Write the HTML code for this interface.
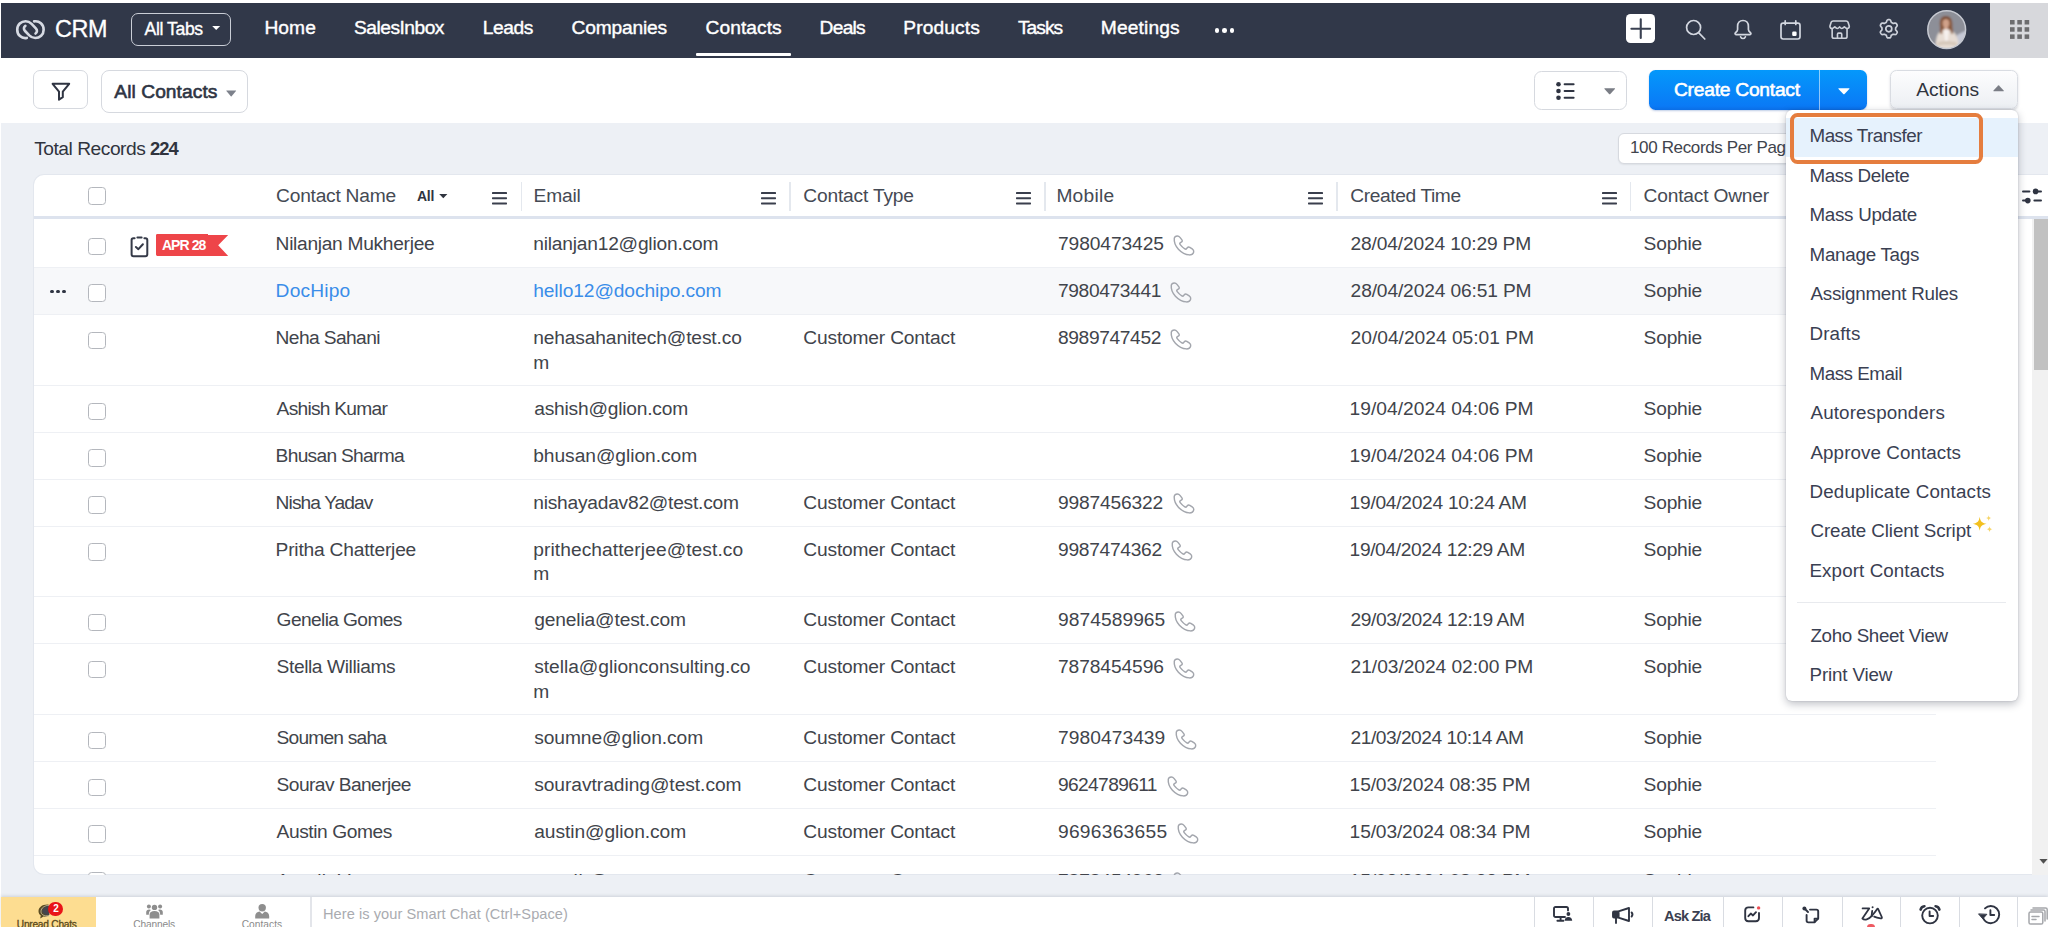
<!DOCTYPE html>
<html><head><meta charset="utf-8"><title>Contacts - Zoho CRM</title>
<style>
*{box-sizing:border-box;margin:0;padding:0}
html,body{width:2048px;height:927px;overflow:hidden;background:#fff}
body{font-family:"Liberation Sans",sans-serif;color:#333;position:relative}
.a{position:absolute}
.t{position:absolute;white-space:nowrap;line-height:1}
svg{position:absolute;overflow:visible}
#nav{left:1px;top:3px;width:1988.5px;height:55px;background:#313849}
#gridbox{left:1989.5px;top:3px;width:58.5px;height:55px;background:#d7d8dc}
#graybg{left:1px;top:123px;width:2047px;height:774.5px;background:#edf0f5}
.btn{position:absolute;border:1.3px solid #d6d9df;border-radius:7px;background:#fff}
#card{left:33px;top:173.7px;width:2015px;height:701.4px;background:#fff;border-radius:11px 0 0 11px;border:1px solid #e3e7ee;border-right:none;overflow:hidden}
  .hl{position:absolute;left:34px;height:1.2px;background:#eef0f4;width:1902px}
.cb{position:absolute;left:88.2px;width:17.6px;height:17.6px;border:1.8px solid #b4b7bd;border-radius:3.6px;background:#fff}
.vs{position:absolute;top:182px;width:1.3px;height:29px;background:#e4e8ee}

</style></head><body>
<div id="nav" class="a"></div><div id="gridbox" class="a"></div><svg style="left:16px;top:19.6px" width="28.9" height="19.3" viewBox="0 0 30 20" fill="none" stroke="#d6dae3" stroke-width="2.75" stroke-linecap="round" stroke-linejoin="round">
<path d="M11.2 18.6 C5.6 19.6 1.3 15.4 1.3 10 C1.3 4.6 5.4 1.3 10 1.3 C12.6 1.3 14.5 2.3 16.2 4 L20.6 8.6 C22.4 10.5 22 12.8 20.3 14"/>
<path d="M18.8 1.4 C24.4 0.4 28.7 4.6 28.7 10 C28.7 15.4 24.6 18.7 20 18.7 C17.4 18.7 15.5 17.7 13.8 16 L9.4 11.4 C7.6 9.5 8 7.2 9.7 6"/>
</svg><div class="t" style="left:54.90px;top:17.89px;font-size:23.4px;color:#fff;letter-spacing:-0.342px;-webkit-text-stroke:0.3px #fff;">CRM</div><div class="a" style="left:131px;top:13.2px;width:99.6px;height:32.6px;border:1.6px solid #c9cdd6;border-radius:7px"></div><div class="t" style="left:144.60px;top:20.80px;font-size:17.6px;color:#fff;letter-spacing:-0.401px;-webkit-text-stroke:0.35px #fff;">All Tabs</div><svg style="left:211.6px;top:26.3px" width="8.4" height="4.2" viewBox="0 0 8.4 4.2"><path d="M0.2 0H8.2L4.2 4.1Z" fill="#fff"/></svg><div class="t" style="left:264.40px;top:17.95px;font-size:19.2px;color:#fff;letter-spacing:0.096px;-webkit-text-stroke:0.4px #fff;">Home</div><div class="t" style="left:354.00px;top:17.95px;font-size:19.2px;color:#fff;letter-spacing:-0.505px;-webkit-text-stroke:0.4px #fff;">SalesInbox</div><div class="t" style="left:482.70px;top:17.95px;font-size:19.2px;color:#fff;letter-spacing:-0.421px;-webkit-text-stroke:0.4px #fff;">Leads</div><div class="t" style="left:571.50px;top:17.95px;font-size:19.2px;color:#fff;letter-spacing:-0.182px;-webkit-text-stroke:0.4px #fff;">Companies</div><div class="t" style="left:705.60px;top:17.95px;font-size:19.2px;color:#fff;letter-spacing:0.053px;-webkit-text-stroke:0.4px #fff;">Contacts</div><div class="t" style="left:819.60px;top:17.95px;font-size:19.2px;color:#fff;letter-spacing:-0.740px;-webkit-text-stroke:0.4px #fff;">Deals</div><div class="t" style="left:903.30px;top:17.95px;font-size:19.2px;color:#fff;letter-spacing:0.125px;-webkit-text-stroke:0.4px #fff;">Products</div><div class="t" style="left:1018.00px;top:17.95px;font-size:19.2px;color:#fff;letter-spacing:-0.988px;-webkit-text-stroke:0.4px #fff;">Tasks</div><div class="t" style="left:1100.80px;top:17.95px;font-size:19.2px;color:#fff;letter-spacing:0.134px;-webkit-text-stroke:0.4px #fff;">Meetings</div><div class="a" style="left:695.5px;top:53.3px;width:95.2px;height:3px;background:#fff;border-radius:1px"></div><div class="a" style="left:1214.6px;top:28.3px;width:4.6px;height:4.6px;border-radius:50%;background:#fff"></div><div class="a" style="left:1222.2px;top:28.3px;width:4.6px;height:4.6px;border-radius:50%;background:#fff"></div><div class="a" style="left:1229.8px;top:28.3px;width:4.6px;height:4.6px;border-radius:50%;background:#fff"></div><div class="a" style="left:1626.2px;top:14.3px;width:29.3px;height:29.2px;background:#fff;border-radius:4.5px"></div><svg style="left:1626.2px;top:14.3px" width="29.3" height="29.2" viewBox="0 0 29.3 29.2" stroke="#3a4152" stroke-width="2.1" stroke-linecap="round"><path d="M5.4 14.7H24.1M14.75 5.4V24"/></svg><svg style="left:1683px;top:17px" width="24" height="24" viewBox="0 0 24 24" fill="none" stroke="#d3d7e0" stroke-width="1.7" stroke-linecap="round"><circle cx="10.6" cy="10.5" r="7"/><path d="M15.8 15.9L21.8 22"/></svg><svg style="left:1733px;top:19px" width="20" height="21" viewBox="0 0 20 21" fill="none" stroke="#d3d7e0" stroke-width="1.7" stroke-linecap="round" stroke-linejoin="round">
<path d="M10 1.5C6.6 1.5 4.6 4 4.6 7.2V10.4C4.6 12 3.6 12.8 2.4 13.8C1.8 14.3 2 15.6 3 15.6H17C18 15.6 18.2 14.3 17.6 13.8C16.4 12.8 15.4 12 15.4 10.4V7.2C15.4 4 13.4 1.5 10 1.5Z"/>
<path d="M7.6 17.8C8.2 19 9 19.5 10 19.5C11 19.5 11.8 19 12.4 17.8"/></svg><svg style="left:1779.6px;top:19.5px" width="21" height="20" viewBox="0 0 21 20" fill="none" stroke="#d3d7e0" stroke-width="1.7" stroke-linecap="round" stroke-linejoin="round">
<rect x="1" y="3.2" width="19" height="15.8" rx="2.2"/><path d="M5.2 0.9V4.4M15.8 0.9V4.4"/><rect x="12.2" y="11.6" width="4.4" height="4.4" rx="1.2" fill="#fff" stroke="none"/></svg><svg style="left:1829.2px;top:20px" width="21.2" height="19.3" viewBox="0 0 21.5 19.5" fill="none" stroke="#cdd1da" stroke-width="1.65" stroke-linecap="round" stroke-linejoin="round">
<path d="M4.2 1H17.3C18.4 1 19 1.5 19.4 2.4L20.6 6.4C20.6 8 19.4 8.6 18.4 8.6C17.2 8.6 16.2 7.6 15.6 7C14.8 7.8 14 8.6 13 8.6C12 8.6 11.4 7.8 10.75 7C10.1 7.8 9.5 8.6 8.5 8.6C7.5 8.6 6.7 7.8 5.9 7C5.3 7.6 4.3 8.6 3.1 8.6C2.1 8.6 0.9 8 0.9 6.4L2.1 2.4C2.5 1.5 3.1 1 4.2 1Z"/>
<path d="M3.2 8.8V16.6C3.2 17.8 3.9 18.5 5.1 18.5H16.4C17.6 18.5 18.3 17.8 18.3 16.6V8.8"/><path d="M8.6 18.3V14.3C8.6 13.7 9 13.3 9.6 13.3H11.9C12.5 13.3 12.9 13.7 12.9 14.3V18.3"/></svg><svg style="left:1877.6px;top:17.6px" width="22" height="22" viewBox="0 0 22 22" fill="none" stroke="#cdd1da" stroke-width="1.7" stroke-linejoin="round">
<path d="M10.80 1.65 L11.40 1.67 L11.99 1.73 L12.50 2.26 L12.87 3.07 L13.15 3.89 L13.42 4.47 L13.83 4.66 L14.22 4.87 L14.61 5.10 L14.97 5.37 L15.61 5.31 L16.46 5.14 L17.34 5.06 L18.06 5.23 L18.41 5.72 L18.72 6.22 L19.01 6.75 L19.25 7.30 L19.04 8.00 L18.53 8.73 L17.96 9.38 L17.59 9.91 L17.64 10.35 L17.65 10.80 L17.64 11.25 L17.59 11.69 L17.96 12.22 L18.53 12.87 L19.04 13.60 L19.25 14.30 L19.01 14.85 L18.72 15.38 L18.41 15.88 L18.06 16.37 L17.34 16.54 L16.46 16.46 L15.61 16.29 L14.97 16.23 L14.61 16.50 L14.22 16.73 L13.83 16.94 L13.42 17.13 L13.15 17.71 L12.87 18.53 L12.50 19.34 L11.99 19.87 L11.40 19.93 L10.80 19.95 L10.20 19.93 L9.61 19.87 L9.10 19.34 L8.73 18.53 L8.45 17.71 L8.18 17.13 L7.77 16.94 L7.38 16.73 L6.99 16.50 L6.63 16.23 L5.99 16.29 L5.14 16.46 L4.26 16.54 L3.54 16.37 L3.19 15.88 L2.88 15.38 L2.59 14.85 L2.35 14.30 L2.56 13.60 L3.07 12.87 L3.64 12.22 L4.01 11.69 L3.96 11.25 L3.95 10.80 L3.96 10.35 L4.01 9.91 L3.64 9.38 L3.07 8.73 L2.56 8.00 L2.35 7.30 L2.59 6.75 L2.88 6.22 L3.19 5.72 L3.54 5.23 L4.26 5.06 L5.14 5.14 L5.99 5.31 L6.63 5.37 L6.99 5.10 L7.37 4.87 L7.77 4.66 L8.18 4.47 L8.45 3.89 L8.73 3.07 L9.10 2.26 L9.61 1.73 L10.20 1.67Z"/><circle cx="10.8" cy="10.8" r="3"/></svg><svg style="left:1926.8px;top:9.8px" width="39.4" height="39.4" viewBox="0 0 39.4 39.4">
<defs><clipPath id="avc"><circle cx="19.7" cy="19.7" r="18.7"/></clipPath><filter id="avb" x="-10%" y="-10%" width="120%" height="120%"><feGaussianBlur stdDeviation="0.8"/></filter></defs>
<circle cx="19.7" cy="19.7" r="19" fill="#8d8f98"/>
<g clip-path="url(#avc)"><g filter="url(#avb)">
<rect x="-2" y="-2" width="44" height="44" fill="#8d8f98"/>
<path d="M30 25L42 19V42H27Z" fill="#c6c9d6"/>
<path d="M12.9 15.5C12.2 9.4 14.6 6.1 18.8 6.1C23.2 6.1 25.6 9.4 25.4 15.5C25.3 18.6 26 21.4 26.6 23.8L12.6 23.8C13.2 21 13.2 18.4 12.9 15.5Z" fill="#87583c"/>
<path d="M14.8 11C15.4 8 17 7 18.9 7C21.2 7 22.8 8.2 23.2 11.2C22 10 20.6 9.2 18.6 9.2C16.8 9.2 15.6 9.9 14.8 11Z" fill="#6f432d"/>
<ellipse cx="19" cy="13.2" rx="3.3" ry="4.2" fill="#d0a189"/>
<rect x="17.4" y="16.4" width="3.2" height="4" fill="#d5ab95"/>
<path d="M8.4 42C8.4 31 9.4 23.4 14 21L17.2 19.6H21L24.8 20.9C30.2 23.2 31.8 31 32.2 42Z" fill="#e7ddd4"/>
<path d="M16.6 19.6L18.2 31H20.6L22 19.6Z" fill="#f6f1ef"/>
<path d="M13.4 17C13 19.6 13 22 13.4 24L15.4 23.6C15.2 21 15.2 19 15.6 17Z" fill="#8a5b3f"/>
<path d="M24.8 17C25.4 19.6 25.8 22 26.2 24L24 23.6C23.8 21 23.4 19 22.8 17Z" fill="#8a5b3f"/>
<path d="M10.6 32.6C15 30.6 24 30.6 29.6 32.6L30 36C24 34.2 15 34.2 10.2 36Z" fill="#d6c8ba"/>
</g></g>
<circle cx="19.7" cy="19.7" r="18.9" fill="none" stroke="#c6c9d1" stroke-width="1.5"/></svg><svg style="left:2009.8px;top:20px" width="20" height="20" viewBox="0 0 20 20"><rect x="0.0" y="0.0" width="4.6" height="4.5" fill="#6c6c6e"/><rect x="7.3" y="0.0" width="4.6" height="4.5" fill="#6c6c6e"/><rect x="14.6" y="0.0" width="4.6" height="4.5" fill="#6c6c6e"/><rect x="0.0" y="7.2" width="4.6" height="4.5" fill="#6c6c6e"/><rect x="7.3" y="7.2" width="4.6" height="4.5" fill="#6c6c6e"/><rect x="14.6" y="7.2" width="4.6" height="4.5" fill="#6c6c6e"/><rect x="0.0" y="14.4" width="4.6" height="4.5" fill="#6c6c6e"/><rect x="7.3" y="14.4" width="4.6" height="4.5" fill="#6c6c6e"/><rect x="14.6" y="14.4" width="4.6" height="4.5" fill="#6c6c6e"/></svg><div id="graybg" class="a"></div><div class="btn" style="left:33.3px;top:70.3px;width:54.3px;height:39.2px"></div><svg style="left:51px;top:82px" width="20" height="20" viewBox="0 0 20 20" fill="none" stroke="#2f3442" stroke-width="2" stroke-linejoin="round" stroke-linecap="round"><path d="M1.6 1.8H18.2L11.8 9.6V15.2L8 17.6V9.6Z"/></svg><div class="btn" style="left:101.3px;top:70.3px;width:146.4px;height:42.4px;border-radius:8px"></div><div class="t" style="left:114.30px;top:81.95px;font-size:19.2px;color:#2e3443;letter-spacing:0.065px;-webkit-text-stroke:0.6px #2e3443;">All Contacts</div><svg style="left:225.8px;top:89.6px" width="10.4" height="6.8" viewBox="0 0 10.4 6.8"><path d="M0.6 0.4H9.8Q10.4 0.5 10 1.1L5.6 6.3Q5.2 6.7 4.8 6.3L0.4 1.1Q0 .5 .6 .4Z" fill="#7d818b"/></svg><div class="btn" style="left:1534px;top:71.2px;width:92.8px;height:38.4px;border-radius:7.5px"></div><svg style="left:1556.4px;top:80.8px" width="19" height="20" viewBox="0 0 19 20"><circle cx="2.5" cy="3.2" r="2.3" fill="#2f3442"/><rect x="7.6" y="2.2" width="11" height="2" rx="1" fill="#2f3442"/><circle cx="2.5" cy="10" r="2.3" fill="#2f3442"/><rect x="7.6" y="9" width="11" height="2" rx="1" fill="#2f3442"/><circle cx="2.5" cy="16.7" r="2.3" fill="#2f3442"/><rect x="7.6" y="15.7" width="11" height="2" rx="1" fill="#2f3442"/></svg><svg style="left:1604.2px;top:88.4px" width="11.4" height="6.6" viewBox="0 0 11.4 6.6"><path d="M0.7 0.3H10.7Q11.4 .4 10.9 1L6.1 6.2Q5.7 6.5 5.3 6.2L.5 1Q0 .4 .7 .3Z" fill="#7a7d85"/></svg><div class="a" style="left:1649.4px;top:70px;width:217.8px;height:40.2px;border-radius:6.5px;background:linear-gradient(#0498fb,#0a7af6 90%,#0b6ee6);box-shadow:0 1px 2px rgba(0,60,160,.25)"></div><div class="a" style="left:1819px;top:70px;width:1.2px;height:40.2px;background:rgba(255,255,255,.55)"></div><div class="t" style="left:1674.00px;top:79.95px;font-size:19.2px;color:#fff;letter-spacing:-0.232px;-webkit-text-stroke:0.6px #fff;">Create Contact</div><svg style="left:1838px;top:88.2px" width="11.8" height="6.6" viewBox="0 0 11.8 6.6"><path d="M0.7 0.2H11.1Q11.8 .3 11.3 .9L6.3 6.2Q5.9 6.5 5.5 6.2L.5 .9Q0 .3 .7 .2Z" fill="#fff"/></svg><div class="a" style="left:1890px;top:70.4px;width:127.8px;height:38.4px;border-radius:6.5px;border:1.2px solid #d9dce2;background:linear-gradient(#fdfdfe,#eceff3);box-shadow:0 1.5px 2.5px rgba(40,50,70,.18)"></div><div class="t" style="left:1916.20px;top:79.75px;font-size:19.2px;color:#30343e;letter-spacing:0.012px;">Actions</div><svg style="left:1993px;top:84.8px" width="11.2" height="6.4" viewBox="0 0 11.2 6.4"><path d="M0.7 6.2H10.5Q11.2 6.1 10.7 5.5L6 .4Q5.6 0 5.2 .4L.5 5.5Q0 6.1 .7 6.2Z" fill="#7a7d85"/></svg><div class="t" style="left:34.20px;top:139.05px;font-size:19.2px;color:#30343e;letter-spacing:-0.476px;">Total Records</div><div class="t" style="left:150.10px;top:139.72px;font-size:18.4px;color:#30343e;font-weight:700;letter-spacing:-1.028px;">224</div><div class="a" style="left:1617.8px;top:132.8px;width:200px;height:31px;border:1.4px solid #d6d9df;border-radius:6px;background:#fff;box-shadow:0 1px 1.5px rgba(40,50,70,.08)"></div><div class="t" style="left:1630.00px;top:139.41px;font-size:17px;color:#40444d;letter-spacing:-0.360px;">100 Records Per Page</div><div id="card" class="a"></div><div class="t" style="left:276.10px;top:185.65px;font-size:19.2px;color:#454a54;letter-spacing:-0.243px;">Contact Name</div><div class="t" style="left:533.60px;top:185.65px;font-size:19.2px;color:#454a54;letter-spacing:-0.179px;">Email</div><div class="t" style="left:803.30px;top:185.65px;font-size:19.2px;color:#454a54;letter-spacing:-0.180px;">Contact Type</div><div class="t" style="left:1056.40px;top:185.65px;font-size:19.2px;color:#454a54;letter-spacing:0.230px;">Mobile</div><div class="t" style="left:1350.30px;top:185.65px;font-size:19.2px;color:#454a54;letter-spacing:-0.395px;">Created Time</div><div class="t" style="left:1643.50px;top:185.65px;font-size:19.2px;color:#454a54;letter-spacing:-0.190px;">Contact Owner</div><div class="t" style="left:416.90px;top:188.65px;font-size:14px;color:#30343f;font-weight:700;letter-spacing:-0.200px;">All</div><svg style="left:439.4px;top:194.4px" width="8.6" height="4.4" viewBox="0 0 8.6 4.4"><path d="M0.2 0H8.4L4.3 4.3Z" fill="#30343f"/></svg><div class="cb" style="top:187px"></div><div class="vs" style="left:520.8px"></div><svg style="left:492.1px;top:192px" width="15" height="13" viewBox="0 0 15 13" fill="#3a3f4d"><rect x="0" y="0" width="15" height="2" rx=".6"/><rect x="0" y="5.2" width="15" height="2" rx=".6"/><rect x="0" y="10.4" width="15" height="2" rx=".6"/></svg><div class="vs" style="left:789.4px"></div><svg style="left:760.7px;top:192px" width="15" height="13" viewBox="0 0 15 13" fill="#3a3f4d"><rect x="0" y="0" width="15" height="2" rx=".6"/><rect x="0" y="5.2" width="15" height="2" rx=".6"/><rect x="0" y="10.4" width="15" height="2" rx=".6"/></svg><div class="vs" style="left:1044.4px"></div><svg style="left:1015.7px;top:192px" width="15" height="13" viewBox="0 0 15 13" fill="#3a3f4d"><rect x="0" y="0" width="15" height="2" rx=".6"/><rect x="0" y="5.2" width="15" height="2" rx=".6"/><rect x="0" y="10.4" width="15" height="2" rx=".6"/></svg><div class="vs" style="left:1336.4px"></div><svg style="left:1307.7px;top:192px" width="15" height="13" viewBox="0 0 15 13" fill="#3a3f4d"><rect x="0" y="0" width="15" height="2" rx=".6"/><rect x="0" y="5.2" width="15" height="2" rx=".6"/><rect x="0" y="10.4" width="15" height="2" rx=".6"/></svg><div class="vs" style="left:1630.2px"></div><svg style="left:1601.5px;top:192px" width="15" height="13" viewBox="0 0 15 13" fill="#3a3f4d"><rect x="0" y="0" width="15" height="2" rx=".6"/><rect x="0" y="5.2" width="15" height="2" rx=".6"/><rect x="0" y="10.4" width="15" height="2" rx=".6"/></svg><div class="a" style="left:34px;top:216.3px;width:2014px;height:2.4px;background:#dde3ee"></div><svg style="left:2021.6px;top:187px" width="20" height="18" viewBox="0 0 20 18" fill="#2f3442"><rect x="0" y="3.4" width="8.4" height="2" rx="1"/><circle cx="13.6" cy="4.4" r="2.8"/><rect x="13.6" y="3.4" width="6.4" height="2" rx="1"/>
<rect x="0" y="12.6" width="6" height="2" rx="1"/><circle cx="5.8" cy="13.6" r="2.8"/><rect x="11.4" y="12.6" width="8.6" height="2" rx="1"/></svg><div class="a" style="left:34px;top:267.7px;width:1902px;height:47.7px;background:#f7f8fa"></div><div class="hl" style="top:266.5px"></div><div class="hl" style="top:314.2px"></div><div class="hl" style="top:385.1px"></div><div class="hl" style="top:431.8px"></div><div class="hl" style="top:478.6px"></div><div class="hl" style="top:525.5px"></div><div class="hl" style="top:596.2px"></div><div class="hl" style="top:643.1px"></div><div class="hl" style="top:714.2px"></div><div class="hl" style="top:761.0px"></div><div class="hl" style="top:807.7px"></div><div class="hl" style="top:854.7px"></div><div class="cb" style="top:237.8px"></div><div class="t" style="left:275.60px;top:234.15px;font-size:19.2px;color:#41444b;letter-spacing:-0.304px;">Nilanjan Mukherjee</div><div class="t" style="left:533.20px;top:234.15px;font-size:19.2px;color:#41444b;letter-spacing:-0.205px;">nilanjan12@glion.com</div><div class="t" style="left:1058.00px;top:234.15px;font-size:19.2px;color:#41444b;letter-spacing:-0.082px;">7980473425</div><svg style="left:1173.2px;top:235.0px" width="22" height="21" viewBox="0 0 22 21" fill="none" stroke="#a3a6ad" stroke-width="1.45" stroke-linejoin="round" stroke-linecap="round"><path d="M1.3 3.2C1.6 1.6 3 .9 4.3 .9C5.5 .9 6.4 1.6 7.2 2.6L8.9 4.9C9.6 5.9 9.2 6.6 8.2 7.2L7.2 7.8C6.6 8.2 6.6 8.8 7.2 9.6C8.6 11.4 10 12.7 11.8 13.8C12.6 14.3 13.2 14.2 13.6 13.6L14.3 12.7C15 11.8 15.8 11.7 16.8 12.3L19.2 13.9C20.4 14.7 20.9 15.6 20.7 16.8C20.4 18.6 18.6 19.9 16.4 19.9C12.4 19.7 8.4 17.4 5.4 14.2C2.6 11.2 .9 7 1.3 3.2Z"/></svg><div class="t" style="left:1350.60px;top:234.15px;font-size:19.2px;color:#41444b;letter-spacing:-0.161px;">28/04/2024 10:29 PM</div><div class="t" style="left:1643.60px;top:234.15px;font-size:19.2px;color:#41444b;letter-spacing:-0.215px;">Sophie</div><div class="cb" style="top:284.1px"></div><div class="t" style="left:275.60px;top:281.05px;font-size:19.2px;color:#3a8de9;letter-spacing:0.181px;">DocHipo</div><div class="t" style="left:533.20px;top:281.05px;font-size:19.2px;color:#3a8de9;letter-spacing:-0.098px;">hello12@dochipo.com</div><div class="t" style="left:1058.00px;top:281.05px;font-size:19.2px;color:#41444b;letter-spacing:-0.371px;">7980473441</div><svg style="left:1170.1px;top:281.9px" width="22" height="21" viewBox="0 0 22 21" fill="none" stroke="#a3a6ad" stroke-width="1.45" stroke-linejoin="round" stroke-linecap="round"><path d="M1.3 3.2C1.6 1.6 3 .9 4.3 .9C5.5 .9 6.4 1.6 7.2 2.6L8.9 4.9C9.6 5.9 9.2 6.6 8.2 7.2L7.2 7.8C6.6 8.2 6.6 8.8 7.2 9.6C8.6 11.4 10 12.7 11.8 13.8C12.6 14.3 13.2 14.2 13.6 13.6L14.3 12.7C15 11.8 15.8 11.7 16.8 12.3L19.2 13.9C20.4 14.7 20.9 15.6 20.7 16.8C20.4 18.6 18.6 19.9 16.4 19.9C12.4 19.7 8.4 17.4 5.4 14.2C2.6 11.2 .9 7 1.3 3.2Z"/></svg><div class="t" style="left:1350.60px;top:281.05px;font-size:19.2px;color:#41444b;letter-spacing:-0.139px;">28/04/2024 06:51 PM</div><div class="t" style="left:1643.60px;top:281.05px;font-size:19.2px;color:#41444b;letter-spacing:-0.215px;">Sophie</div><div class="cb" style="top:331.8px"></div><div class="t" style="left:275.60px;top:328.35px;font-size:19.2px;color:#41444b;letter-spacing:-0.608px;">Neha Sahani</div><div class="t" style="left:533.20px;top:328.35px;font-size:19.2px;color:#41444b;letter-spacing:-0.134px;">nehasahanitech@test.co</div><div class="t" style="left:533.20px;top:352.75px;font-size:19.2px;color:#41444b;">m</div><div class="t" style="left:803.30px;top:328.35px;font-size:19.2px;color:#41444b;letter-spacing:-0.180px;">Customer Contact</div><div class="t" style="left:1058.00px;top:328.35px;font-size:19.2px;color:#41444b;letter-spacing:-0.371px;">8989747452</div><svg style="left:1170.1px;top:329.2px" width="22" height="21" viewBox="0 0 22 21" fill="none" stroke="#a3a6ad" stroke-width="1.45" stroke-linejoin="round" stroke-linecap="round"><path d="M1.3 3.2C1.6 1.6 3 .9 4.3 .9C5.5 .9 6.4 1.6 7.2 2.6L8.9 4.9C9.6 5.9 9.2 6.6 8.2 7.2L7.2 7.8C6.6 8.2 6.6 8.8 7.2 9.6C8.6 11.4 10 12.7 11.8 13.8C12.6 14.3 13.2 14.2 13.6 13.6L14.3 12.7C15 11.8 15.8 11.7 16.8 12.3L19.2 13.9C20.4 14.7 20.9 15.6 20.7 16.8C20.4 18.6 18.6 19.9 16.4 19.9C12.4 19.7 8.4 17.4 5.4 14.2C2.6 11.2 .9 7 1.3 3.2Z"/></svg><div class="t" style="left:1350.60px;top:328.35px;font-size:19.2px;color:#41444b;letter-spacing:-0.006px;">20/04/2024 05:01 PM</div><div class="t" style="left:1643.60px;top:328.35px;font-size:19.2px;color:#41444b;letter-spacing:-0.215px;">Sophie</div><div class="cb" style="top:402.7px"></div><div class="t" style="left:276.60px;top:399.35px;font-size:19.2px;color:#41444b;letter-spacing:-0.750px;">Ashish Kumar</div><div class="t" style="left:534.20px;top:399.35px;font-size:19.2px;color:#41444b;letter-spacing:-0.205px;">ashish@glion.com</div><div class="t" style="left:1349.60px;top:399.35px;font-size:19.2px;color:#41444b;letter-spacing:0.027px;">19/04/2024 04:06 PM</div><div class="t" style="left:1643.60px;top:399.35px;font-size:19.2px;color:#41444b;letter-spacing:-0.215px;">Sophie</div><div class="cb" style="top:449.4px"></div><div class="t" style="left:275.60px;top:446.05px;font-size:19.2px;color:#41444b;letter-spacing:-0.710px;">Bhusan Sharma</div><div class="t" style="left:533.20px;top:446.05px;font-size:19.2px;color:#41444b;letter-spacing:-0.038px;">bhusan@glion.com</div><div class="t" style="left:1349.60px;top:446.05px;font-size:19.2px;color:#41444b;letter-spacing:0.027px;">19/04/2024 04:06 PM</div><div class="t" style="left:1643.60px;top:446.05px;font-size:19.2px;color:#41444b;letter-spacing:-0.215px;">Sophie</div><div class="cb" style="top:496.2px"></div><div class="t" style="left:275.60px;top:492.55px;font-size:19.2px;color:#41444b;letter-spacing:-0.917px;">Nisha Yadav</div><div class="t" style="left:533.20px;top:492.55px;font-size:19.2px;color:#41444b;letter-spacing:-0.231px;">nishayadav82@test.com</div><div class="t" style="left:803.30px;top:492.55px;font-size:19.2px;color:#41444b;letter-spacing:-0.180px;">Customer Contact</div><div class="t" style="left:1058.00px;top:492.55px;font-size:19.2px;color:#41444b;letter-spacing:-0.171px;">9987456322</div><svg style="left:1172.5px;top:493.4px" width="22" height="21" viewBox="0 0 22 21" fill="none" stroke="#a3a6ad" stroke-width="1.45" stroke-linejoin="round" stroke-linecap="round"><path d="M1.3 3.2C1.6 1.6 3 .9 4.3 .9C5.5 .9 6.4 1.6 7.2 2.6L8.9 4.9C9.6 5.9 9.2 6.6 8.2 7.2L7.2 7.8C6.6 8.2 6.6 8.8 7.2 9.6C8.6 11.4 10 12.7 11.8 13.8C12.6 14.3 13.2 14.2 13.6 13.6L14.3 12.7C15 11.8 15.8 11.7 16.8 12.3L19.2 13.9C20.4 14.7 20.9 15.6 20.7 16.8C20.4 18.6 18.6 19.9 16.4 19.9C12.4 19.7 8.4 17.4 5.4 14.2C2.6 11.2 .9 7 1.3 3.2Z"/></svg><div class="t" style="left:1349.60px;top:492.55px;font-size:19.2px;color:#41444b;letter-spacing:-0.278px;">19/04/2024 10:24 AM</div><div class="t" style="left:1643.60px;top:492.55px;font-size:19.2px;color:#41444b;letter-spacing:-0.215px;">Sophie</div><div class="cb" style="top:543.1px"></div><div class="t" style="left:275.60px;top:539.55px;font-size:19.2px;color:#41444b;letter-spacing:-0.207px;">Pritha Chatterjee</div><div class="t" style="left:533.20px;top:539.55px;font-size:19.2px;color:#41444b;letter-spacing:0.074px;">prithechatterjee@test.co</div><div class="t" style="left:533.20px;top:563.95px;font-size:19.2px;color:#41444b;">m</div><div class="t" style="left:803.30px;top:539.55px;font-size:19.2px;color:#41444b;letter-spacing:-0.180px;">Customer Contact</div><div class="t" style="left:1058.00px;top:539.55px;font-size:19.2px;color:#41444b;letter-spacing:-0.282px;">9987474362</div><svg style="left:1170.6px;top:540.4px" width="22" height="21" viewBox="0 0 22 21" fill="none" stroke="#a3a6ad" stroke-width="1.45" stroke-linejoin="round" stroke-linecap="round"><path d="M1.3 3.2C1.6 1.6 3 .9 4.3 .9C5.5 .9 6.4 1.6 7.2 2.6L8.9 4.9C9.6 5.9 9.2 6.6 8.2 7.2L7.2 7.8C6.6 8.2 6.6 8.8 7.2 9.6C8.6 11.4 10 12.7 11.8 13.8C12.6 14.3 13.2 14.2 13.6 13.6L14.3 12.7C15 11.8 15.8 11.7 16.8 12.3L19.2 13.9C20.4 14.7 20.9 15.6 20.7 16.8C20.4 18.6 18.6 19.9 16.4 19.9C12.4 19.7 8.4 17.4 5.4 14.2C2.6 11.2 .9 7 1.3 3.2Z"/></svg><div class="t" style="left:1349.60px;top:539.55px;font-size:19.2px;color:#41444b;letter-spacing:-0.384px;">19/04/2024 12:29 AM</div><div class="t" style="left:1643.60px;top:539.55px;font-size:19.2px;color:#41444b;letter-spacing:-0.215px;">Sophie</div><div class="cb" style="top:613.8px"></div><div class="t" style="left:276.60px;top:610.35px;font-size:19.2px;color:#41444b;letter-spacing:-0.626px;">Genelia Gomes</div><div class="t" style="left:534.20px;top:610.35px;font-size:19.2px;color:#41444b;letter-spacing:-0.139px;">genelia@test.com</div><div class="t" style="left:803.30px;top:610.35px;font-size:19.2px;color:#41444b;letter-spacing:-0.180px;">Customer Contact</div><div class="t" style="left:1058.00px;top:610.35px;font-size:19.2px;color:#41444b;letter-spacing:0.062px;">9874589965</div><svg style="left:1174.0px;top:611.2px" width="22" height="21" viewBox="0 0 22 21" fill="none" stroke="#a3a6ad" stroke-width="1.45" stroke-linejoin="round" stroke-linecap="round"><path d="M1.3 3.2C1.6 1.6 3 .9 4.3 .9C5.5 .9 6.4 1.6 7.2 2.6L8.9 4.9C9.6 5.9 9.2 6.6 8.2 7.2L7.2 7.8C6.6 8.2 6.6 8.8 7.2 9.6C8.6 11.4 10 12.7 11.8 13.8C12.6 14.3 13.2 14.2 13.6 13.6L14.3 12.7C15 11.8 15.8 11.7 16.8 12.3L19.2 13.9C20.4 14.7 20.9 15.6 20.7 16.8C20.4 18.6 18.6 19.9 16.4 19.9C12.4 19.7 8.4 17.4 5.4 14.2C2.6 11.2 .9 7 1.3 3.2Z"/></svg><div class="t" style="left:1350.60px;top:610.35px;font-size:19.2px;color:#41444b;letter-spacing:-0.450px;">29/03/2024 12:19 AM</div><div class="t" style="left:1643.60px;top:610.35px;font-size:19.2px;color:#41444b;letter-spacing:-0.215px;">Sophie</div><div class="cb" style="top:660.7px"></div><div class="t" style="left:276.60px;top:657.35px;font-size:19.2px;color:#41444b;letter-spacing:-0.410px;">Stella Williams</div><div class="t" style="left:534.20px;top:657.35px;font-size:19.2px;color:#41444b;letter-spacing:-0.022px;">stella@glionconsulting.co</div><div class="t" style="left:533.20px;top:681.75px;font-size:19.2px;color:#41444b;">m</div><div class="t" style="left:803.30px;top:657.35px;font-size:19.2px;color:#41444b;letter-spacing:-0.180px;">Customer Contact</div><div class="t" style="left:1058.00px;top:657.35px;font-size:19.2px;color:#41444b;letter-spacing:-0.082px;">7878454596</div><svg style="left:1172.5px;top:658.2px" width="22" height="21" viewBox="0 0 22 21" fill="none" stroke="#a3a6ad" stroke-width="1.45" stroke-linejoin="round" stroke-linecap="round"><path d="M1.3 3.2C1.6 1.6 3 .9 4.3 .9C5.5 .9 6.4 1.6 7.2 2.6L8.9 4.9C9.6 5.9 9.2 6.6 8.2 7.2L7.2 7.8C6.6 8.2 6.6 8.8 7.2 9.6C8.6 11.4 10 12.7 11.8 13.8C12.6 14.3 13.2 14.2 13.6 13.6L14.3 12.7C15 11.8 15.8 11.7 16.8 12.3L19.2 13.9C20.4 14.7 20.9 15.6 20.7 16.8C20.4 18.6 18.6 19.9 16.4 19.9C12.4 19.7 8.4 17.4 5.4 14.2C2.6 11.2 .9 7 1.3 3.2Z"/></svg><div class="t" style="left:1350.60px;top:657.35px;font-size:19.2px;color:#41444b;letter-spacing:-0.045px;">21/03/2024 02:00 PM</div><div class="t" style="left:1643.60px;top:657.35px;font-size:19.2px;color:#41444b;letter-spacing:-0.215px;">Sophie</div><div class="cb" style="top:731.8px"></div><div class="t" style="left:276.60px;top:727.95px;font-size:19.2px;color:#41444b;letter-spacing:-0.803px;">Soumen saha</div><div class="t" style="left:534.20px;top:727.95px;font-size:19.2px;color:#41444b;letter-spacing:-0.058px;">soumne@glion.com</div><div class="t" style="left:803.30px;top:727.95px;font-size:19.2px;color:#41444b;letter-spacing:-0.180px;">Customer Contact</div><div class="t" style="left:1058.00px;top:727.95px;font-size:19.2px;color:#41444b;letter-spacing:0.062px;">7980473439</div><svg style="left:1174.6px;top:728.8px" width="22" height="21" viewBox="0 0 22 21" fill="none" stroke="#a3a6ad" stroke-width="1.45" stroke-linejoin="round" stroke-linecap="round"><path d="M1.3 3.2C1.6 1.6 3 .9 4.3 .9C5.5 .9 6.4 1.6 7.2 2.6L8.9 4.9C9.6 5.9 9.2 6.6 8.2 7.2L7.2 7.8C6.6 8.2 6.6 8.8 7.2 9.6C8.6 11.4 10 12.7 11.8 13.8C12.6 14.3 13.2 14.2 13.6 13.6L14.3 12.7C15 11.8 15.8 11.7 16.8 12.3L19.2 13.9C20.4 14.7 20.9 15.6 20.7 16.8C20.4 18.6 18.6 19.9 16.4 19.9C12.4 19.7 8.4 17.4 5.4 14.2C2.6 11.2 .9 7 1.3 3.2Z"/></svg><div class="t" style="left:1350.60px;top:727.95px;font-size:19.2px;color:#41444b;letter-spacing:-0.506px;">21/03/2024 10:14 AM</div><div class="t" style="left:1643.60px;top:727.95px;font-size:19.2px;color:#41444b;letter-spacing:-0.215px;">Sophie</div><div class="cb" style="top:778.6px"></div><div class="t" style="left:276.60px;top:775.35px;font-size:19.2px;color:#41444b;letter-spacing:-0.576px;">Sourav Banerjee</div><div class="t" style="left:534.20px;top:775.35px;font-size:19.2px;color:#41444b;letter-spacing:-0.041px;">souravtrading@test.com</div><div class="t" style="left:803.30px;top:775.35px;font-size:19.2px;color:#41444b;letter-spacing:-0.180px;">Customer Contact</div><div class="t" style="left:1058.00px;top:775.35px;font-size:19.2px;color:#41444b;letter-spacing:-0.646px;">9624789611</div><svg style="left:1166.8px;top:776.2px" width="22" height="21" viewBox="0 0 22 21" fill="none" stroke="#a3a6ad" stroke-width="1.45" stroke-linejoin="round" stroke-linecap="round"><path d="M1.3 3.2C1.6 1.6 3 .9 4.3 .9C5.5 .9 6.4 1.6 7.2 2.6L8.9 4.9C9.6 5.9 9.2 6.6 8.2 7.2L7.2 7.8C6.6 8.2 6.6 8.8 7.2 9.6C8.6 11.4 10 12.7 11.8 13.8C12.6 14.3 13.2 14.2 13.6 13.6L14.3 12.7C15 11.8 15.8 11.7 16.8 12.3L19.2 13.9C20.4 14.7 20.9 15.6 20.7 16.8C20.4 18.6 18.6 19.9 16.4 19.9C12.4 19.7 8.4 17.4 5.4 14.2C2.6 11.2 .9 7 1.3 3.2Z"/></svg><div class="t" style="left:1349.60px;top:775.35px;font-size:19.2px;color:#41444b;letter-spacing:-0.139px;">15/03/2024 08:35 PM</div><div class="t" style="left:1643.60px;top:775.35px;font-size:19.2px;color:#41444b;letter-spacing:-0.215px;">Sophie</div><div class="cb" style="top:825.3px"></div><div class="t" style="left:276.60px;top:822.25px;font-size:19.2px;color:#41444b;letter-spacing:-0.428px;">Austin Gomes</div><div class="t" style="left:534.20px;top:822.25px;font-size:19.2px;color:#41444b;letter-spacing:-0.054px;">austin@glion.com</div><div class="t" style="left:803.30px;top:822.25px;font-size:19.2px;color:#41444b;letter-spacing:-0.180px;">Customer Contact</div><div class="t" style="left:1058.00px;top:822.25px;font-size:19.2px;color:#41444b;letter-spacing:0.262px;">9696363655</div><svg style="left:1176.6px;top:823.1px" width="22" height="21" viewBox="0 0 22 21" fill="none" stroke="#a3a6ad" stroke-width="1.45" stroke-linejoin="round" stroke-linecap="round"><path d="M1.3 3.2C1.6 1.6 3 .9 4.3 .9C5.5 .9 6.4 1.6 7.2 2.6L8.9 4.9C9.6 5.9 9.2 6.6 8.2 7.2L7.2 7.8C6.6 8.2 6.6 8.8 7.2 9.6C8.6 11.4 10 12.7 11.8 13.8C12.6 14.3 13.2 14.2 13.6 13.6L14.3 12.7C15 11.8 15.8 11.7 16.8 12.3L19.2 13.9C20.4 14.7 20.9 15.6 20.7 16.8C20.4 18.6 18.6 19.9 16.4 19.9C12.4 19.7 8.4 17.4 5.4 14.2C2.6 11.2 .9 7 1.3 3.2Z"/></svg><div class="t" style="left:1349.60px;top:822.25px;font-size:19.2px;color:#41444b;letter-spacing:-0.139px;">15/03/2024 08:34 PM</div><div class="t" style="left:1643.60px;top:822.25px;font-size:19.2px;color:#41444b;letter-spacing:-0.215px;">Sophie</div><div class="cb" style="top:872.3px"></div><div class="t" style="left:276.60px;top:870.95px;font-size:19.2px;color:#41444b;letter-spacing:0.297px;">Antolit Verma</div><div class="t" style="left:534.20px;top:870.95px;font-size:19.2px;color:#41444b;letter-spacing:0.520px;">antolit@test.com</div><div class="t" style="left:803.30px;top:870.95px;font-size:19.2px;color:#41444b;letter-spacing:-0.180px;">Customer Contact</div><div class="t" style="left:1058.00px;top:870.95px;font-size:19.2px;color:#41444b;letter-spacing:-0.082px;">7878454963</div><svg style="left:1172.5px;top:871.8px" width="22" height="21" viewBox="0 0 22 21" fill="none" stroke="#a3a6ad" stroke-width="1.45" stroke-linejoin="round" stroke-linecap="round"><path d="M1.3 3.2C1.6 1.6 3 .9 4.3 .9C5.5 .9 6.4 1.6 7.2 2.6L8.9 4.9C9.6 5.9 9.2 6.6 8.2 7.2L7.2 7.8C6.6 8.2 6.6 8.8 7.2 9.6C8.6 11.4 10 12.7 11.8 13.8C12.6 14.3 13.2 14.2 13.6 13.6L14.3 12.7C15 11.8 15.8 11.7 16.8 12.3L19.2 13.9C20.4 14.7 20.9 15.6 20.7 16.8C20.4 18.6 18.6 19.9 16.4 19.9C12.4 19.7 8.4 17.4 5.4 14.2C2.6 11.2 .9 7 1.3 3.2Z"/></svg><div class="t" style="left:1349.60px;top:870.95px;font-size:19.2px;color:#41444b;letter-spacing:-0.139px;">15/03/2024 08:33 PM</div><div class="t" style="left:1643.60px;top:870.95px;font-size:19.2px;color:#41444b;letter-spacing:-0.215px;">Sophie</div><div class="a" style="left:50.0px;top:289.7px;width:3.8px;height:3.8px;border-radius:50%;background:#2f3442"></div><div class="a" style="left:56.1px;top:289.7px;width:3.8px;height:3.8px;border-radius:50%;background:#2f3442"></div><div class="a" style="left:62.2px;top:289.7px;width:3.8px;height:3.8px;border-radius:50%;background:#2f3442"></div><svg style="left:130.2px;top:235.8px" width="19" height="21.4" viewBox="0 0 19 21.4" fill="none" stroke="#353a48" stroke-width="2" stroke-linecap="round" stroke-linejoin="round">
<path d="M4.6 2.2H3.4C2.2 2.2 1.6 2.9 1.6 4V18.3C1.6 19.5 2.2 20.2 3.4 20.2H15.4C16.6 20.2 17.3 19.5 17.3 18.3V4C17.3 2.9 16.6 2.2 15.4 2.2H14.4"/><path d="M7.4 1.5H11.6"/><path d="M5.9 11L8.4 13.2L12.9 8.3"/></svg><svg style="left:155.7px;top:234.4px" width="72.2" height="22" viewBox="0 0 72.2 22"><path d="M1.4 0H52V1H72.2L62.2 11.2L72.2 22H1.4Q0 22 0 20.6V1.4Q0 0 1.4 0Z" fill="#ee4549"/></svg><div class="t" style="left:161.90px;top:237.95px;font-size:14px;color:#fff;font-weight:700;letter-spacing:-0.927px;">APR 28</div><div class="a" style="left:1px;top:875.1px;width:2047px;height:23px;background:#edf0f5"></div><div class="a" style="left:2032px;top:218.7px;width:16px;height:656.4px;background:#f1f1f1"></div><div class="a" style="left:2034.4px;top:219px;width:13.6px;height:151px;background:#c1c1c1"></div><svg style="left:2038.6px;top:858.8px" width="9" height="5.2" viewBox="0 0 8 5"><path d="M0 0H8L4 4.6Z" fill="#505050"/></svg><div class="a" style="left:1786px;top:110.4px;width:232px;height:590.4px;background:#fff;border-radius:6px;box-shadow:0 3px 9px rgba(20,30,50,.28),0 0 1.5px rgba(30,40,60,.25)"></div><div class="a" style="left:1786px;top:117.5px;width:232px;height:39px;background:#e6f2fd"></div><div class="a" style="left:1789.8px;top:113px;width:193.2px;height:51.2px;border:4.6px solid #e57d3e;border-radius:7.5px"></div><div class="t" style="left:1809.50px;top:127.29px;font-size:18.8px;color:#3a4052;letter-spacing:-0.505px;">Mass Transfer</div><div class="t" style="left:1809.50px;top:166.59px;font-size:18.8px;color:#3a4052;letter-spacing:-0.413px;">Mass Delete</div><div class="t" style="left:1809.50px;top:206.29px;font-size:18.8px;color:#3a4052;letter-spacing:-0.291px;">Mass Update</div><div class="t" style="left:1809.50px;top:245.69px;font-size:18.8px;color:#3a4052;letter-spacing:-0.257px;">Manage Tags</div><div class="t" style="left:1810.50px;top:285.29px;font-size:18.8px;color:#3a4052;letter-spacing:-0.245px;">Assignment Rules</div><div class="t" style="left:1809.50px;top:325.09px;font-size:18.8px;color:#3a4052;letter-spacing:0.140px;">Drafts</div><div class="t" style="left:1809.50px;top:364.69px;font-size:18.8px;color:#3a4052;letter-spacing:-0.464px;">Mass Email</div><div class="t" style="left:1810.50px;top:404.19px;font-size:18.8px;color:#3a4052;letter-spacing:0.130px;">Autoresponders</div><div class="t" style="left:1810.50px;top:443.79px;font-size:18.8px;color:#3a4052;letter-spacing:0.074px;">Approve Contacts</div><div class="t" style="left:1809.50px;top:483.29px;font-size:18.8px;color:#3a4052;letter-spacing:0.151px;">Deduplicate Contacts</div><div class="t" style="left:1810.50px;top:522.49px;font-size:18.8px;color:#3a4052;letter-spacing:-0.111px;">Create Client Script</div><div class="t" style="left:1809.50px;top:561.89px;font-size:18.8px;color:#3a4052;letter-spacing:0.091px;">Export Contacts</div><div class="t" style="left:1810.50px;top:627.29px;font-size:18.8px;color:#3a4052;letter-spacing:-0.366px;">Zoho Sheet View</div><div class="t" style="left:1809.50px;top:665.89px;font-size:18.8px;color:#3a4052;letter-spacing:-0.149px;">Print View</div><div class="a" style="left:1796.6px;top:602px;width:209.4px;height:1.2px;background:#e8eaee"></div><svg style="left:1972.4px;top:515px" width="21.4" height="19.3" viewBox="0 0 20 18">
<path d="M7.2 1.6C7.9 6 9 7.2 13.6 8.2C9 9.2 7.9 10.4 7.2 14.8C6.5 10.4 5.4 9.2 .8 8.2C5.4 7.2 6.5 6 7.2 1.6Z" fill="#f3c01f"/>
<path d="M15.6 .2C15.9 2 16.4 2.5 18.2 2.9C16.4 3.3 15.9 3.8 15.6 5.6C15.3 3.8 14.8 3.3 13 2.9C14.8 2.5 15.3 2 15.6 .2Z" fill="#f6d567"/>
<path d="M16.4 10.6C16.7 12.4 17.2 12.9 19 13.3C17.2 13.7 16.7 14.2 16.4 16C16.1 14.2 15.6 13.7 13.8 13.3C15.6 12.9 16.1 12.4 16.4 10.6Z" fill="#f6d567"/></svg><div class="a" style="left:1px;top:897.2px;width:2047px;height:30px;background:#fff;box-shadow:0 -1px 3px rgba(60,70,90,.18)"></div><div class="a" style="left:1px;top:897.2px;width:95px;height:30px;background:#fddd91"></div><svg style="left:37.8px;top:903.8px" width="12" height="15" viewBox="0 0 12 15">
<path d="M9.6 .6C4.4 .4 .5 3.4 .5 7.2C.5 9 1.4 10.6 2.8 11.6L2.2 14.6L5.6 12.6C7.6 12.8 9.4 12.4 10.8 11.6V.8Z" fill="#5b4c22"/>
<path d="M11 1.4C6.4 1.6 3 4 3 7.4C3 10.6 6 12.4 10.8 11.8" fill="none" stroke="#b9b39c" stroke-width="1"/>
<path d="M11.4 1.8C7.4 2 4.2 4.2 4.2 7.2C4.2 10 7 11.4 11.4 11Z" fill="#45454c"/></svg><div class="a" style="left:48.4px;top:901.7px;width:14.8px;height:14.8px;border-radius:50%;background:#e91418"></div><div class="t" style="left:53.20px;top:904.13px;font-size:10px;color:#fff;font-weight:700;">2</div><div class="t" style="left:16.80px;top:919.67px;font-size:10.2px;color:#5a4a1c;letter-spacing:-0.251px;-webkit-text-stroke:0.3px #5a4a1c;">Unread Chats</div><svg style="left:145.6px;top:903.8px" width="17" height="14.6" viewBox="0 0 17 14.6" fill="#8e8e8e">
<circle cx="8.5" cy="3.4" r="2.7"/><circle cx="2.9" cy="2.6" r="2"/><circle cx="14.1" cy="2.6" r="2"/>
<path d="M3.6 14.4V10.6C3.6 8.4 5.4 7 8.5 7C11.6 7 13.4 8.4 13.4 10.6V14.4Z"/>
<path d="M.2 10.8V8C.2 6.4 1.4 5.4 3.2 5.4C4 5.4 4.6 5.6 5 5.9C3.6 6.8 2.8 8.2 2.8 10.8Z"/>
<path d="M16.8 10.8V8C16.8 6.4 15.6 5.4 13.8 5.4C13 5.4 12.4 5.6 12 5.9C13.4 6.8 14.2 8.2 14.2 10.8Z"/></svg><div class="t" style="left:133.30px;top:919.67px;font-size:10.2px;color:#8a8a8a;letter-spacing:-0.178px;">Channels</div><svg style="left:254.6px;top:903.8px" width="14.4" height="14.8" viewBox="0 0 14.4 14.8" fill="#8e8e8e">
<circle cx="7.2" cy="3.8" r="3.7"/><path d="M.2 14.6V12C.2 9.4 2.4 7.8 4.6 7.6L7.2 10L9.8 7.6C12 7.8 14.2 9.4 14.2 12V14.6Z"/></svg><div class="t" style="left:241.70px;top:919.67px;font-size:10.2px;color:#8a8a8a;letter-spacing:0.027px;">Contacts</div><div class="a" style="left:310.4px;top:897.2px;width:1.3px;height:30px;background:#e3e5ea"></div><div class="t" style="left:323.00px;top:907.04px;font-size:14.6px;color:#a9abb0;letter-spacing:0.056px;">Here is your Smart Chat (Ctrl+Space)</div><div class="a" style="left:1533.7px;top:897.2px;width:1.4px;height:30px;background:#d9dce2"></div><div class="a" style="left:1592.5px;top:897.2px;width:1.4px;height:30px;background:#d9dce2"></div><div class="a" style="left:1651.5px;top:897.2px;width:1.4px;height:30px;background:#d9dce2"></div><div class="a" style="left:1722.9px;top:897.2px;width:1.4px;height:30px;background:#d9dce2"></div><div class="a" style="left:1781.9px;top:897.2px;width:1.4px;height:30px;background:#d9dce2"></div><div class="a" style="left:1841.7px;top:897.2px;width:1.4px;height:30px;background:#d9dce2"></div><div class="a" style="left:1900.1px;top:897.2px;width:1.4px;height:30px;background:#d9dce2"></div><div class="a" style="left:1958.7px;top:897.2px;width:1.4px;height:30px;background:#d9dce2"></div><div class="a" style="left:2017.1px;top:897.2px;width:1.4px;height:30px;background:#d9dce2"></div><svg style="left:1553.4px;top:905.6px" width="20.4" height="16" viewBox="0 0 20.4 16" fill="none" stroke="#2f3442" stroke-width="1.9" stroke-linecap="round" stroke-linejoin="round">
<path d="M12 11H2.6C1.6 11 1 10.4 1 9.4V2.6C1 1.6 1.6 1 2.6 1H13.4C14.4 1 15 1.6 15 2.6V4.4"/><path d="M7.6 11.2V14.6M4.4 14.8H10.4"/>
<circle cx="15.4" cy="8" r="1.9" fill="#2f3442" stroke="none"/><path d="M11.6 14.8C11.6 12.4 13.2 11 15.4 11C17.6 11 19.2 12.4 19.2 14.8Z" fill="#2f3442" stroke="none"/></svg><svg style="left:1611.6px;top:906.6px" width="21.6" height="17.4" viewBox="0 0 21.6 17.4" fill="none" stroke="#2f3442" stroke-width="1.9" stroke-linecap="round" stroke-linejoin="round">
<path d="M6.4 4.4L17 1V14L6.4 10.6Z"/><rect x="1" y="4.4" width="5.4" height="6.2" rx="1" fill="#2f3442"/><path d="M4 10.8V16"/><path d="M19.6 5.4C20.6 6.6 20.6 8.4 19.6 9.6"/></svg><div class="t" style="left:1664.00px;top:908.64px;font-size:14.6px;color:#3b4050;font-weight:700;letter-spacing:-0.833px;">Ask Zia</div><svg style="left:1744.2px;top:906.4px" width="17" height="16.6" viewBox="0 0 17 16.6" fill="none" stroke="#2f3442" stroke-width="1.9" stroke-linecap="round" stroke-linejoin="round">
<path d="M9.4 1.4H4.4C2.4 1.4 1.2 2.6 1.2 4.6V12C1.2 14 2.4 15.2 4.4 15.2H11.8C13.8 15.2 15 14 15 12V7"/><path d="M4.4 10.2L6.8 7.6L9 9.4L12 6.2"/><circle cx="14.6" cy="1.9" r="1.7" fill="#ee4f55" stroke="none"/></svg><svg style="left:1801.6px;top:906.4px" width="18" height="18" viewBox="0 0 18 18" fill="none" stroke="#2f3442" stroke-width="1.9" stroke-linecap="round" stroke-linejoin="round">
<circle cx="2.4" cy="2.4" r="2" fill="#2f3442" stroke="none"/><path d="M3 3L6 6"/><path d="M8 3.6H14.4C15.6 3.6 16.2 4.2 16.2 5.4V12.6L12.4 16.4H6.4C5.2 16.4 4.6 15.8 4.6 14.6V9"/><path d="M16 12.6H12.6V16"/></svg><svg style="left:1860.6px;top:906.4px" width="22.4" height="16" viewBox="0 0 22.4 16" fill="none" stroke="#2f3442" stroke-width="1.8" stroke-linecap="round" stroke-linejoin="round">
<path d="M1.6 2.4H8.2L1.4 12.6C3.6 14.6 7.8 13.4 10.6 10.2"/><circle cx="11.6" cy="1.2" r="1" fill="#2f3442" stroke="none"/><path d="M11.2 4.8L10.6 10.2"/>
<path d="M10.8 10C12.4 8 14.6 5.4 16 3.2C16.4 2.6 17 2.6 17.3 3.3L20.8 11C21.2 12 20.6 12.6 19.6 12.4C17.4 12 15 11.4 13.2 10.6"/></svg><div class="a" style="left:1867.2px;top:923.6px;width:7.6px;height:7.6px;border-radius:50%;background:#ee5a62"></div><svg style="left:1919.2px;top:904.6px" width="22" height="20" viewBox="0 0 22 20" fill="none" stroke="#2f3442" stroke-width="1.9" stroke-linecap="round" stroke-linejoin="round">
<circle cx="11" cy="10.6" r="7.8"/><path d="M10.6 6.4V11H14.2"/><path d="M1.6 4.6C2 2.8 3.6 1.4 5.4 1.2" stroke-width="2.6"/><path d="M20.4 4.6C20 2.8 18.4 1.4 16.6 1.2" stroke-width="2.6"/></svg><svg style="left:1977.6px;top:905px" width="23" height="19.6" viewBox="0 0 23 19.6" fill="none" stroke="#2f3442" stroke-width="1.9" stroke-linecap="round" stroke-linejoin="round">
<path d="M7 3.4C8.6 1.8 10.6 1 12.8 1C17.4 1 21.2 4.8 21.2 9.6C21.2 14.4 17.4 18.2 12.8 18.2C9.6 18.2 6.8 16.4 5.4 13.6"/><path d="M.8 9.2L4.8 13.8L8.6 9.6Z" fill="#2f3442" stroke-width="1"/><path d="M12.4 5.2V10H16.2"/></svg><svg style="left:2028.4px;top:906.6px" width="20" height="18" viewBox="0 0 20 18" fill="none" stroke="#a5a7ab" stroke-width="1.5" stroke-linecap="round" stroke-linejoin="round">
<path d="M5 1H17.6C18.6 1 19.2 1.6 19.2 2.6V12"/><path d="M3 3H15.4C16.4 3 17 3.6 17 4.6V14"/><rect x="1" y="5" width="13.8" height="12" rx="1.6" fill="#fff"/><path d="M4 9.4H11M4 12.4H8"/></svg>
</body></html>
